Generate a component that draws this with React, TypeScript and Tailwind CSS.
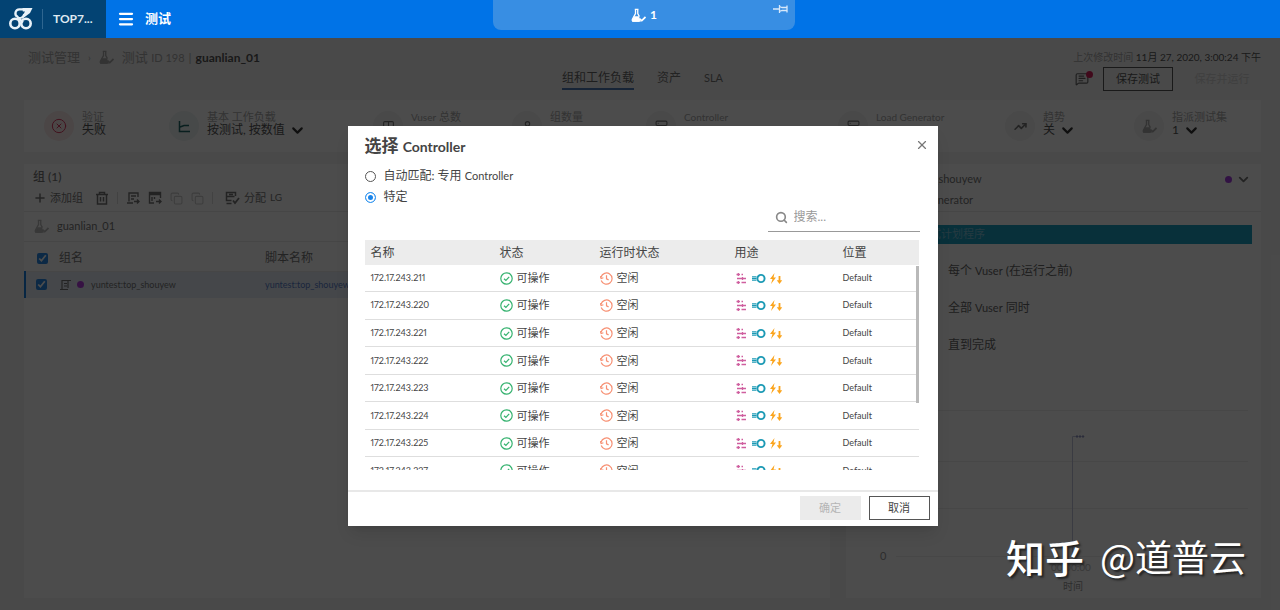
import React, { useState } from 'react';
import {
  ChevronDown,
  CircleX,
  Columns2,
  Copy,
  Menu,
  MessageSquareText,
  Plus,
  Search,
  Server,
  TrendingUp,
  User,
  X,
} from 'lucide-react';

const controllers = [
  '172.17.243.211',
  '172.17.243.220',
  '172.17.243.221',
  '172.17.243.222',
  '172.17.243.223',
  '172.17.243.224',
  '172.17.243.225',
  '172.17.243.227',
];

const Logo = () => (
  <svg width="26" height="24" viewBox="0 0 26 24" fill="none" stroke="#e8f1f8" strokeWidth="2.6">
    <circle cx="7" cy="16.5" r="4.7" />
    <circle cx="18" cy="16.5" r="4.7" />
    <path d="M23 2.300H11.500a4 4 0 0 0-2 7.500L15 15.500M9 11c3 .6 6.500-.5 7.500-4" strokeWidth="2.300" />
    <path d="M14.500 1h10l-2.500 5-8 6 1-5z" fill="#e8f1f8" stroke="none" />
    <path d="M13 4.500h4l-1.500 2.500h-2.500z" fill="#034373" stroke="none" />
  </svg>
);

const Flask = ({ className = '' }: { className?: string }) => (
  <svg className={className} width="15" height="15" viewBox="0 0 16 16" fill="none" stroke="currentColor" strokeWidth="1.4">
    <path d="M4 1.500h4M4.800 1.500v4.500L1.500 12c-.5 1.300 0 2 1.200 2h5.800M7.200 1.500V6l1.800 3.200" />
    <path d="M3.500 9.500h4.500l1.500 4.500H2z" fill="currentColor" />
    <path d="M9 11.500l2.500 2L15.500 9.500" strokeWidth="1.800" />
  </svg>
);

const Pin = () => (
  <svg width="16" height="10" viewBox="0 0 16 10" fill="none" stroke="#d8e9fa" strokeWidth="1.300">
    <path d="M0 5h6M6.500 1v8M6.500 2.500L9 3.500h5M6.500 7.500L9 6.500h5M14 1.500v7" />
  </svg>
);

const TrashIcon = () => (
  <svg width="14" height="14" viewBox="0 0 14 14" fill="none" stroke="currentColor" strokeWidth="1.500">
    <path d="M1 3.500h12M4.500 3.500V1.500h5v2M2.500 3.500V13h9V3.500M5.500 6v4.500M8.500 6v4.500" />
  </svg>
);

const ScriptIcon = () => (
  <svg width="14" height="14" viewBox="0 0 14 14" fill="none" stroke="currentColor" strokeWidth="1.400">
    <path d="M12 6V2H3v8.500M1 12h6M5 5h5M5 8h3M8 10.500h5M11 8.500l2 2-2 2" />
  </svg>
);

const ScheduleIcon = () => (
  <svg width="14" height="14" viewBox="0 0 14 14" fill="none" stroke="currentColor" strokeWidth="1.400">
    <path d="M6 12H1.500V1.500h11V7M8 10.500h5M11 8.500l2 2-2 2M4 6v4M6.500 6v2" />
    <path d="M1.500 3h11" strokeWidth="2.500" />
  </svg>
);

const AssignIcon = () => (
  <svg width="15" height="14" viewBox="0 0 15 14" fill="none" stroke="currentColor" strokeWidth="1.500">
    <path d="M10.500 5V1.500h-9v8h5M1.500 5.500h8M1.500 12.500h5M4 3.500h4" />
    <path d="M8 9.500l2 2.500 4-5" strokeWidth="1.800" />
  </svg>
);

const GroupIcon = () => (
  <svg width="13" height="12" viewBox="0 0 13 12" fill="none" stroke="currentColor" strokeWidth="1.200">
    <path d="M12 1.500H3v9M9 1.500v7.500M1 10.500h8M5 4.500h3M5 7h3" />
  </svg>
);

const ChartIcon = () => (
  <svg width="13" height="13" viewBox="0 0 13 13" fill="none" stroke="#216a68" strokeWidth="1.500">
    <path d="M1.500 1v10.500H12M2 7l4-1.500h5" />
  </svg>
);

const CheckIcon = () => (
  <svg width="13" height="13" viewBox="0 0 13 13" fill="none" stroke="#35b26f" strokeWidth="1.200">
    <circle cx="6.500" cy="6.500" r="5.700" />
    <path d="M4 6.700l1.900 1.800 3.300-3.600" />
  </svg>
);

const IdleIcon = () => (
  <svg width="13" height="13" viewBox="0 0 13 13" fill="none" stroke="#f79073" strokeWidth="1.200">
    <path d="M1.200 8.500A5.600 5.600 0 1 0 1.100 5M.2 4.200l.9 2.300 2.300-.7" />
    <path d="M6.500 3.300v3.500l2.100 1.100" />
  </svg>
);

const PurposeIcons = () => (
  <svg width="48" height="13" viewBox="0 0 48 13" fill="none">
    <g stroke="#cf5f9f" strokeWidth="1.300">
      <path d="M1.500 2.500H5M6.500 2.500h1.500M2 6.500h9M1.500 10.500H5M6.500 10.500H11M3.300 1v3M7.500 5v3M3.300 9v3" />
    </g>
    <g stroke="#1c9ab5">
      <path d="M17 4.800h4.500M17 6.500h4.500M17 8.200h4.500" strokeWidth="1.200" />
      <circle cx="26" cy="6.500" r="3.600" strokeWidth="1.900" />
    </g>
    <path d="M39.500 1L35 7h2.500L36 12l5-6.500h-2.500z" fill="#fba41c" />
    <path d="M44.500 4v6" stroke="#fba41c" strokeWidth="1.800" />
    <path d="M41.800 8.300h5.400l-2.700 3.700z" fill="#fba41c" />
  </svg>
);

type MetricProps = {
  label: React.ReactNode;
  value?: string;
  icon: React.ReactNode;
  tone?: string;
  dropdown?: boolean;
};

const Metric = ({ label, value, icon, tone = 'bg-[#f3f3f3]', dropdown }: MetricProps) => (
  <div className="flex items-center gap-2">
    <div className={`flex size-[30px] shrink-0 items-center justify-center rounded-full ${tone}`}>{icon}</div>
    <div className="flex h-8 flex-col whitespace-nowrap">
      <span className="text-[11px] leading-[14px] text-[#aaa]">{label}</span>
      {dropdown ? (
        <button className="flex h-3 items-center gap-1 text-xs leading-3 text-[#555]">
          {value}
          <ChevronDown size={17} strokeWidth={3} color="#333" />
        </button>
      ) : (
        <span className="text-xs leading-3 text-[#555]">{value}</span>
      )}
    </div>
  </div>
);

const TopBar = () => (
  <header className="relative flex h-[38px] shrink-0 items-center bg-[#0073e7] text-white">
    <div className="flex h-full w-[106px] items-center bg-[#034373] pl-2">
      <Logo />
      <span className="ml-2 h-5 w-px bg-[#2f6690]" />
      <span className="ml-2.5 text-xs font-bold text-[#dfe9f1]">TOP7...</span>
    </div>
    <button aria-label="menu" className="ml-[11px]">
      <Menu size={18} strokeWidth={3} />
    </button>
    <span className="ml-2.5 text-[13px] font-bold">测试</span>
    <div className="absolute top-0 left-1/2 flex h-[30px] w-[302px] -translate-x-[147px] items-center justify-center gap-1 rounded-b-lg bg-[#388ee3] text-xs font-bold">
      <Flask />
      <span>1</span>
      <button aria-label="pin" className="absolute top-1 right-1.5">
        <Pin />
      </button>
    </div>
  </header>
);

const PageHead = () => (
  <div>
    <div className="flex h-[19px] items-center justify-between">
      <nav className="flex items-center gap-1 pl-1 text-[13px] text-[#aaa]">
        <a href="#tests">测试管理</a>
        <span className="px-1 text-[10px]">›</span>
        <Flask />
        <span className="pl-1">
          测试 <span className="text-[11px]">ID 198</span>
        </span>
        <span className="text-xs">|</span>
        <span className="text-xs font-bold text-[#555]">guanlian_01</span>
      </nav>
      <p className="text-[10px] text-[#555]">
        <span className="text-[#aaa]">上次修改时间</span> 11月 27, 2020, 3:00:24 下午
      </p>
    </div>
    <div className="grid h-6 grid-cols-[1fr_auto_1fr] items-center">
      <div></div>
      <nav className="flex gap-[23px] text-xs leading-5 text-[#777]">
        <a href="#workload" className="border-b-2 border-[#4f78b4] text-[#666]">组和工作负载</a>
        <a href="#assets">资产</a>
        <a href="#sla" className="text-[11px]">SLA</a>
      </nav>
      <div className="flex items-center justify-end gap-2.5 text-[11px]">
        <span className="relative mr-1 text-[#666]">
          <MessageSquareText size={14} />
          <span className="absolute -top-px -right-1 size-[7px] rounded-full bg-[#d8205c]" />
        </span>
        <button className="h-6 w-[70px] border border-[#555] text-[#555]">保存测试</button>
        <button disabled className="h-6 w-[78px] bg-[#f3f3f3] text-[#d4d4d4]">保存并运行</button>
      </div>
    </div>
  </div>
);

const Metrics = () => (
  <section className="mt-[9px] grid h-[52px] grid-cols-[125fr_204fr_139fr_134fr_192fr_167fr_129fr_127fr] items-center bg-white pl-5">
    <Metric label="验证" value="失败" tone="bg-[#faeaea]" icon={<CircleX size={16} strokeWidth={1.5} color="#dc3c64" />} />
    <Metric label="基本 工作负载" value="按测试, 按数值" dropdown tone="bg-[#eef4f3]" icon={<ChartIcon />} />
    <Metric label={<><span className="text-[10px]">Vuser</span> 总数</>} icon={<Columns2 size={13} color="#777" />} />
    <Metric label="组数量" icon={<User size={13} color="#777" />} />
    <Metric label={<span className="text-[10px]">Controller</span>} icon={<Server size={13} color="#777" />} />
    <Metric label={<span className="text-[10px]">Load Generator</span>} icon={<Server size={13} color="#777" />} />
    <Metric label="趋势" value="关" dropdown icon={<TrendingUp size={13} strokeWidth={3} color="#777" />} />
    <Metric label="指派测试集" value="1" dropdown icon={<Flask className="text-[#aaa]" />} />
  </section>
);

const CHECKBOX = 'block size-[11px] accent-[#2a8be8]';

const Groups = () => (
  <section className="bg-white text-xs text-[#777]">
    <div className="border-b border-[#eaeaea] px-[9px] pt-[3px]">
      <h2 className="leading-5 font-medium">组 (1)</h2>
      <div className="flex h-6 items-center gap-2 pb-0.5 text-[11px]">
        <button className="flex items-center gap-[3px]">
          <Plus size={14} strokeWidth={2.5} />
          添加组
        </button>
        <button aria-label="delete" className="ml-1"><TrashIcon /></button>
        <span className="h-3 w-px bg-[#ddd]" />
        <button aria-label="add script"><ScriptIcon /></button>
        <button aria-label="schedule"><ScheduleIcon /></button>
        <button aria-label="copy" className="text-[#ccc]"><Copy size={13} /></button>
        <button aria-label="paste" className="text-[#ccc]"><Copy size={13} /></button>
        <span className="mr-1 h-3 w-px bg-[#ddd]" />
        <button className="flex items-center gap-1">
          <AssignIcon />
          分配 <span className="text-[10px]">LG</span>
        </button>
      </div>
    </div>
    <div className="flex h-[30px] items-center gap-2 border-b border-[#eaeaea] pl-2.5 text-[11px]">
      <Flask className="text-[#bbb]" />
      guanlian_01
    </div>
    <table className="w-full table-fixed text-left">
      <colgroup>
        <col className="w-[34px]" />
        <col className="w-[206px]" />
        <col />
      </colgroup>
      <thead>
        <tr className="h-[29px] border-b border-[#eaeaea]">
          <th className="pt-1 pl-3"><input type="checkbox" defaultChecked aria-label="all" className={CHECKBOX} /></th>
          <th className="pt-1 font-normal">组名</th>
          <th className="pt-1 font-normal">脚本名称</th>
        </tr>
      </thead>
      <tbody>
        <tr className="h-[27px] bg-[#e6eff8]">
          <td className="border-l-2 border-[#1a7fe0] pl-2.5"><input type="checkbox" defaultChecked aria-label="yuntest:top_shouyew" className={CHECKBOX} /></td>
          <td>
            <div className="flex items-center gap-[5px] text-[9px]">
              <GroupIcon />
              <span className="mr-0.5 size-[7px] rounded-full bg-[#b43ee0]" />
              yuntest:top_shouyew
            </div>
          </td>
          <td className="text-[9px]"><a href="#script" className="text-[#5b80cc]">yuntest:top_shouyew</a></td>
        </tr>
      </tbody>
    </table>
  </section>
);

const Scheduler = () => (
  <section className="flex flex-col bg-white text-[11px] text-[#777]">
    <div className="border-b border-[#eaeaea] pt-1 pb-px pl-8">
      <div className="flex h-[22px] items-center gap-1 pr-2.5">
        <span className="flex-1">yuntest:top_shouyew</span>
        <span className="size-[7px] rounded-full bg-[#a53ee0]" />
        <ChevronDown size={15} strokeWidth={3} />
      </div>
      <p className="pl-5 leading-5">Load Generator</p>
    </div>
    <div className="mx-[9px] mt-[13px] flex h-[19px] items-center bg-[#1ba0c4] pl-16 text-[11px] text-[#7fc3d9]">测试计划程序</div>
    <ul className="pt-2 pl-[102px] text-xs text-[#666]">
      <li className="h-[37px] leading-[37px]">每个 <span className="text-[11px]">Vuser</span> (在运行之前)</li>
      <li className="h-[37px] leading-[37px]">全部 <span className="text-[11px]">Vuser</span> 同时</li>
      <li className="h-[37px] leading-[37px]">直到完成</li>
    </ul>
    <svg className="mt-auto w-full" height="226" viewBox="0 0 415 226" fill="none">
      <path d="M50 38.500h352M50 89.500h352M50 136.500h352M50 184.500h352" stroke="#efefef" />
      <path d="M226.500 184V64.500h12" stroke="#c4c6dc" />
      <path d="M230 64.500h8" stroke="#8f94c4" strokeWidth="2" strokeDasharray="2 1" />
      <text x="34" y="188" fontSize="11" fill="#999">0</text>
      <text x="205" y="199" fontSize="10" fill="#bbb">00:00:00</text>
      <text x="217" y="218" fontSize="10" fill="#999">时间</text>
    </svg>
  </section>
);

const RADIO =
  "size-[11px] shrink-0 appearance-none rounded-full border border-[#555] checked:border-[#3296f0] checked:bg-[#1a84ea] checked:shadow-[inset_0_0_0_2px_white]";

const ControllerDialog = () => {
  const [mode, setMode] = useState('specific');

  return (
    <div role="dialog" aria-labelledby="dialog-title" className="flex h-[400px] w-full max-w-[590px] flex-col bg-white text-[#444] shadow-lg">
      <div className="flex-1 pr-[19px] pl-[17px]">
        <div className="flex items-start justify-between pt-2">
          <h1 id="dialog-title" className="text-[17px] leading-6 font-bold">
            选择 <span className="text-sm">Controller</span>
          </h1>
          <button aria-label="close" className="-mr-3.5 p-1 text-[#777]"><X size={14} /></button>
        </div>
        <div className="flex flex-col gap-px pt-2 text-xs leading-5">
          <label className="flex items-center gap-2">
            <input type="radio" name="mode" className={RADIO} checked={mode === 'auto'} onChange={() => setMode('auto')} />
            <span>自动匹配: 专用 <span className="text-[11px]">Controller</span></span>
          </label>
          <label className="flex items-center gap-2">
            <input type="radio" name="mode" className={RADIO} checked={mode === 'specific'} onChange={() => setMode('specific')} />
            <span>特定</span>
          </label>
        </div>
        <label className="-mr-px ml-auto flex h-[25px] w-[152px] items-center gap-1.5 border-b border-[#999] pb-1 pl-[7px]">
          <Search size={13} strokeWidth={3} color="#888" className="shrink-0" />
          <input aria-label="search" placeholder="搜索..." className="w-full min-w-0 text-xs outline-none placeholder:text-[#999]" />
        </label>

        <div className="relative mt-2 h-[230px] overflow-hidden">
          <table className="h-[245px] w-full table-fixed text-left whitespace-nowrap">
            <colgroup>
              <col className="w-[129px]" />
              <col className="w-[100px]" />
              <col className="w-[135px]" />
              <col className="w-[108px]" />
              <col />
            </colgroup>
            <thead>
              <tr className="h-[25px] bg-[#ececec] text-xs">
                <th className="pl-1.5 font-normal">名称</th>
                <th className="pl-1.5 font-normal">状态</th>
                <th className="pl-1.5 font-normal">运行时状态</th>
                <th className="pl-1.5 font-normal">用途</th>
                <th className="pl-1.5 font-normal">位置</th>
              </tr>
            </thead>
            <tbody className="text-[11px] leading-4">
              {controllers.map((ip) => (
                <tr key={ip} className="border-b border-[#dedede]">
                  <td className="pl-1.5 text-[9px] proportional-nums">{ip}</td>
                  <td className="pl-1.5">
                    <div className="flex items-center gap-1"><CheckIcon />可操作</div>
                  </td>
                  <td className="pl-1.5">
                    <div className="flex items-center gap-1"><IdleIcon />空闲</div>
                  </td>
                  <td className="pl-1.5"><PurposeIcons /></td>
                  <td className="pl-1.5 text-[9px]">Default</td>
                </tr>
              ))}
            </tbody>
          </table>
          <div className="absolute top-[26px] right-0 h-[137px] w-[3px] bg-[#b9b9b9]" />
        </div>
      </div>
      <div className="flex h-9 items-start justify-end gap-2 border-t-2 border-[#e8e8e8] pt-1 pr-2 text-[11px]">
        <button disabled className="h-6 w-[61px] bg-[#ebebeb] text-[#b5b5b5]">确定</button>
        <button className="h-6 w-[61px] border border-[#555]">取消</button>
      </div>
    </div>
  );
};

export default function App() {
  return (
    <div className="relative flex min-h-screen flex-col bg-[#f5f5f5] font-[Lato,'Noto_Sans_CJK_SC',sans-serif]">
      <TopBar />
      <div className="relative flex flex-1 flex-col">
        <main className="flex flex-1 flex-col pt-2.5 pr-[19px] pb-3 pl-6">
          <PageHead />
          <Metrics />
          <div className="mt-3 grid flex-1 grid-cols-[806fr_415fr] gap-4">
            <Groups />
            <Scheduler />
          </div>
        </main>
        <div className="absolute inset-0 flex items-start justify-center bg-black/70 pt-[88px] pl-[5px]">
          <ControllerDialog />
        </div>
      </div>
      <div className="absolute right-[34px] bottom-7 flex items-center gap-4 font-['Noto_Sans_CJK_SC',sans-serif] leading-[52px] text-white [text-shadow:2px_2px_2px_#222]">
        <span className="text-[39px] font-medium">知乎</span>
        <span className="text-[37px]">@道普云</span>
      </div>
    </div>
  );
}
